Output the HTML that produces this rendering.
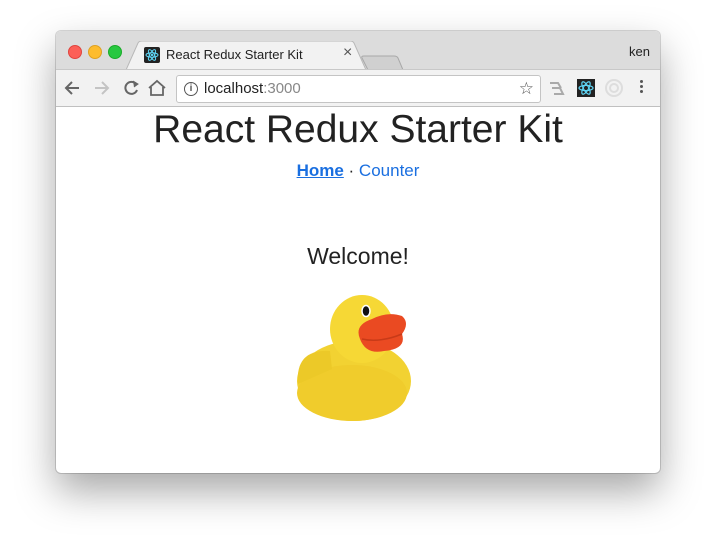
<!DOCTYPE html>
<html><head><style>
body{margin:0;width:716px;height:554px;background:#fff;position:relative;overflow:hidden;font-family:"Liberation Sans",sans-serif}
.win{position:absolute;left:56px;top:31px;width:604px;height:442px;border-radius:5px;background:#fff;box-shadow:0 18px 40px rgba(0,0,0,.35),0 0 0 1px rgba(0,0,0,.15);overflow:hidden}
.title{position:absolute;left:0;top:0;width:604px;height:38px;background:#dcdcdc}
.dot{position:absolute;top:14px;width:12px;height:12px;border-radius:50%}
.tool{position:absolute;left:0;top:38px;width:604px;height:36px;background:#f2f2f2;border-top:1px solid #c8c8c8;border-bottom:1px solid #c0c0c0}
.url{position:absolute;left:120px;top:5px;width:363px;height:26px;background:#fff;border:1px solid #c4c4c4;border-radius:3px;font-size:15px;line-height:26px}
.content{position:absolute;left:0;top:75px;width:604px;text-align:center;color:#222}
a{color:#1a6fe0;text-decoration:none}
</style></head><body>
<div class="win">
 <div class="title">
  <div class="dot" style="left:12px;background:#fc5f57;border:0.5px solid #e0443e"></div>
  <div class="dot" style="left:32px;background:#fdbc2e;border:0.5px solid #dea123"></div>
  <div class="dot" style="left:52px;background:#28c840;border:0.5px solid #1aab29"></div>
  <svg style="position:absolute;left:70px;top:10px" width="280" height="29"><path d="M0 29 L12 2 Q13 0 16 0 L224 0 Q227 0 228 2 L240 29 Z" fill="#f2f2f2" stroke="#b8b8b8"/><path d="M242 29 L236 17 Q235 15 238 15 L268 15 Q271 15 272 17 L277 29" fill="#d0d0d0" stroke="#a8a8a8"/></svg>
  <div style="position:absolute;left:88px;top:16px;width:16px;height:16px;background:#222;border-radius:2px"><svg width="16" height="16"><g fill="none" stroke="#5ed3f3" stroke-width="1"><ellipse cx="8" cy="8" rx="6" ry="2.3"/><ellipse cx="8" cy="8" rx="6" ry="2.3" transform="rotate(60 8 8)"/><ellipse cx="8" cy="8" rx="6" ry="2.3" transform="rotate(-60 8 8)"/></g><circle cx="8" cy="8" r="1.2" fill="#5ed3f3"/></svg></div>
  <div style="position:absolute;left:110px;top:16px;font-size:13px;color:#222">React Redux Starter Kit</div>
  <div style="position:absolute;left:287px;top:13px;font-size:16px;color:#555">×</div>
  <div style="position:absolute;left:573px;top:13px;font-size:13px;color:#222">ken</div>
 </div>
 <div class="tool">
  <svg style="position:absolute;left:8px;top:9px" width="110" height="18" fill="none" stroke-width="2"><path d="M2 9 H15 M8 3 L2 9 L8 15" stroke="#666"/><path d="M31 9 H44 M38 3 L44 9 L38 15" stroke="#c4c4c4"/><path d="M72 5 A6 6 0 1 0 73 11" stroke="#666"/><path d="M69 2 L74 5 L70 8" stroke="#666" fill="#666" stroke-width="1"/><path d="M85 9 L93 2 L101 9 M87 8 V16 H99 V8" stroke="#666" stroke-width="1.8"/></svg>
  <div class="url"><span style="position:absolute;left:7px;top:6px;width:12px;height:12px;border:1.5px solid #555;border-radius:50%;font-size:10px;line-height:12px;text-align:center;font-weight:bold;color:#555">i</span><span style="position:absolute;left:27px;color:#222">localhost<span style="color:#888">:3000</span></span><span style="position:absolute;right:6px;top:0;color:#555;font-size:17px">☆</span></div>
  <div style="position:absolute;left:521px;top:9px;width:18px;height:18px;background:#222"><svg width="18" height="18"><g fill="none" stroke="#5ed3f3" stroke-width="1.2"><ellipse cx="9" cy="9" rx="7" ry="2.6"/><ellipse cx="9" cy="9" rx="7" ry="2.6" transform="rotate(60 9 9)"/><ellipse cx="9" cy="9" rx="7" ry="2.6" transform="rotate(-60 9 9)"/></g></svg></div>
  <svg style="position:absolute;left:492px;top:10px" width="18" height="16" fill="none" stroke="#aaa" stroke-width="2"><path d="M2 3 H10 L13 8 M4 8 H12 L15 14 H6"/></svg>
  <svg style="position:absolute;left:548px;top:8px" width="20" height="20" fill="none" stroke="#ddd" stroke-width="2"><circle cx="10" cy="10" r="8"/><circle cx="10" cy="10" r="4"/></svg>
  <div style="position:absolute;left:584px;top:10px;width:3px">
   <div style="width:3px;height:3px;background:#555;border-radius:50%;margin-bottom:2px"></div><div style="width:3px;height:3px;background:#555;border-radius:50%;margin-bottom:2px"></div><div style="width:3px;height:3px;background:#555;border-radius:50%"></div></div>
 </div>
 <div class="content">
  <div style="font-size:39px;margin-top:1px;line-height:46px">React Redux Starter Kit</div>
  <div style="font-size:17px;margin-top:8px;line-height:18px;visibility:hidden">Home · Counter</div>
  <div style="font-size:23px;margin-top:64px;line-height:26px">Welcome!</div>
 </div>
 <svg style="position:absolute;left:236px;top:258px" width="130" height="140">
  <ellipse cx="62" cy="92" rx="57" ry="40" fill="#f2d232"/>
  <ellipse cx="60" cy="104" rx="55" ry="28" fill="#f0cc2c"/>
  <path d="M6 95 Q3 60 38 62 L40 80 Z" fill="#ecc928"/>
  <ellipse cx="70" cy="40" rx="32" ry="34" fill="#f6d835"/>
  <ellipse cx="74" cy="22" rx="4" ry="5.5" fill="#111" stroke="#fff" stroke-width="1.5"/>
  <path d="M68 50 Q62 36 80 30 Q96 22 110 27 Q118 34 110 45 Q115 60 92 62 Q74 66 68 50Z" fill="#ea4a22"/>
  <path d="M70 50 Q88 54 110 45" stroke="#c83a18" fill="none" stroke-width="1.5"/>
 </svg>
</div>
<div style="position:absolute;left:56px;top:162px;width:604px;text-align:center;font-size:17px;line-height:18px;color:#222;font-family:'Liberation Sans',sans-serif"><a href="#" style="font-weight:bold;text-decoration:underline">Home</a> · <a href="#">Counter</a></div>
</body></html>
